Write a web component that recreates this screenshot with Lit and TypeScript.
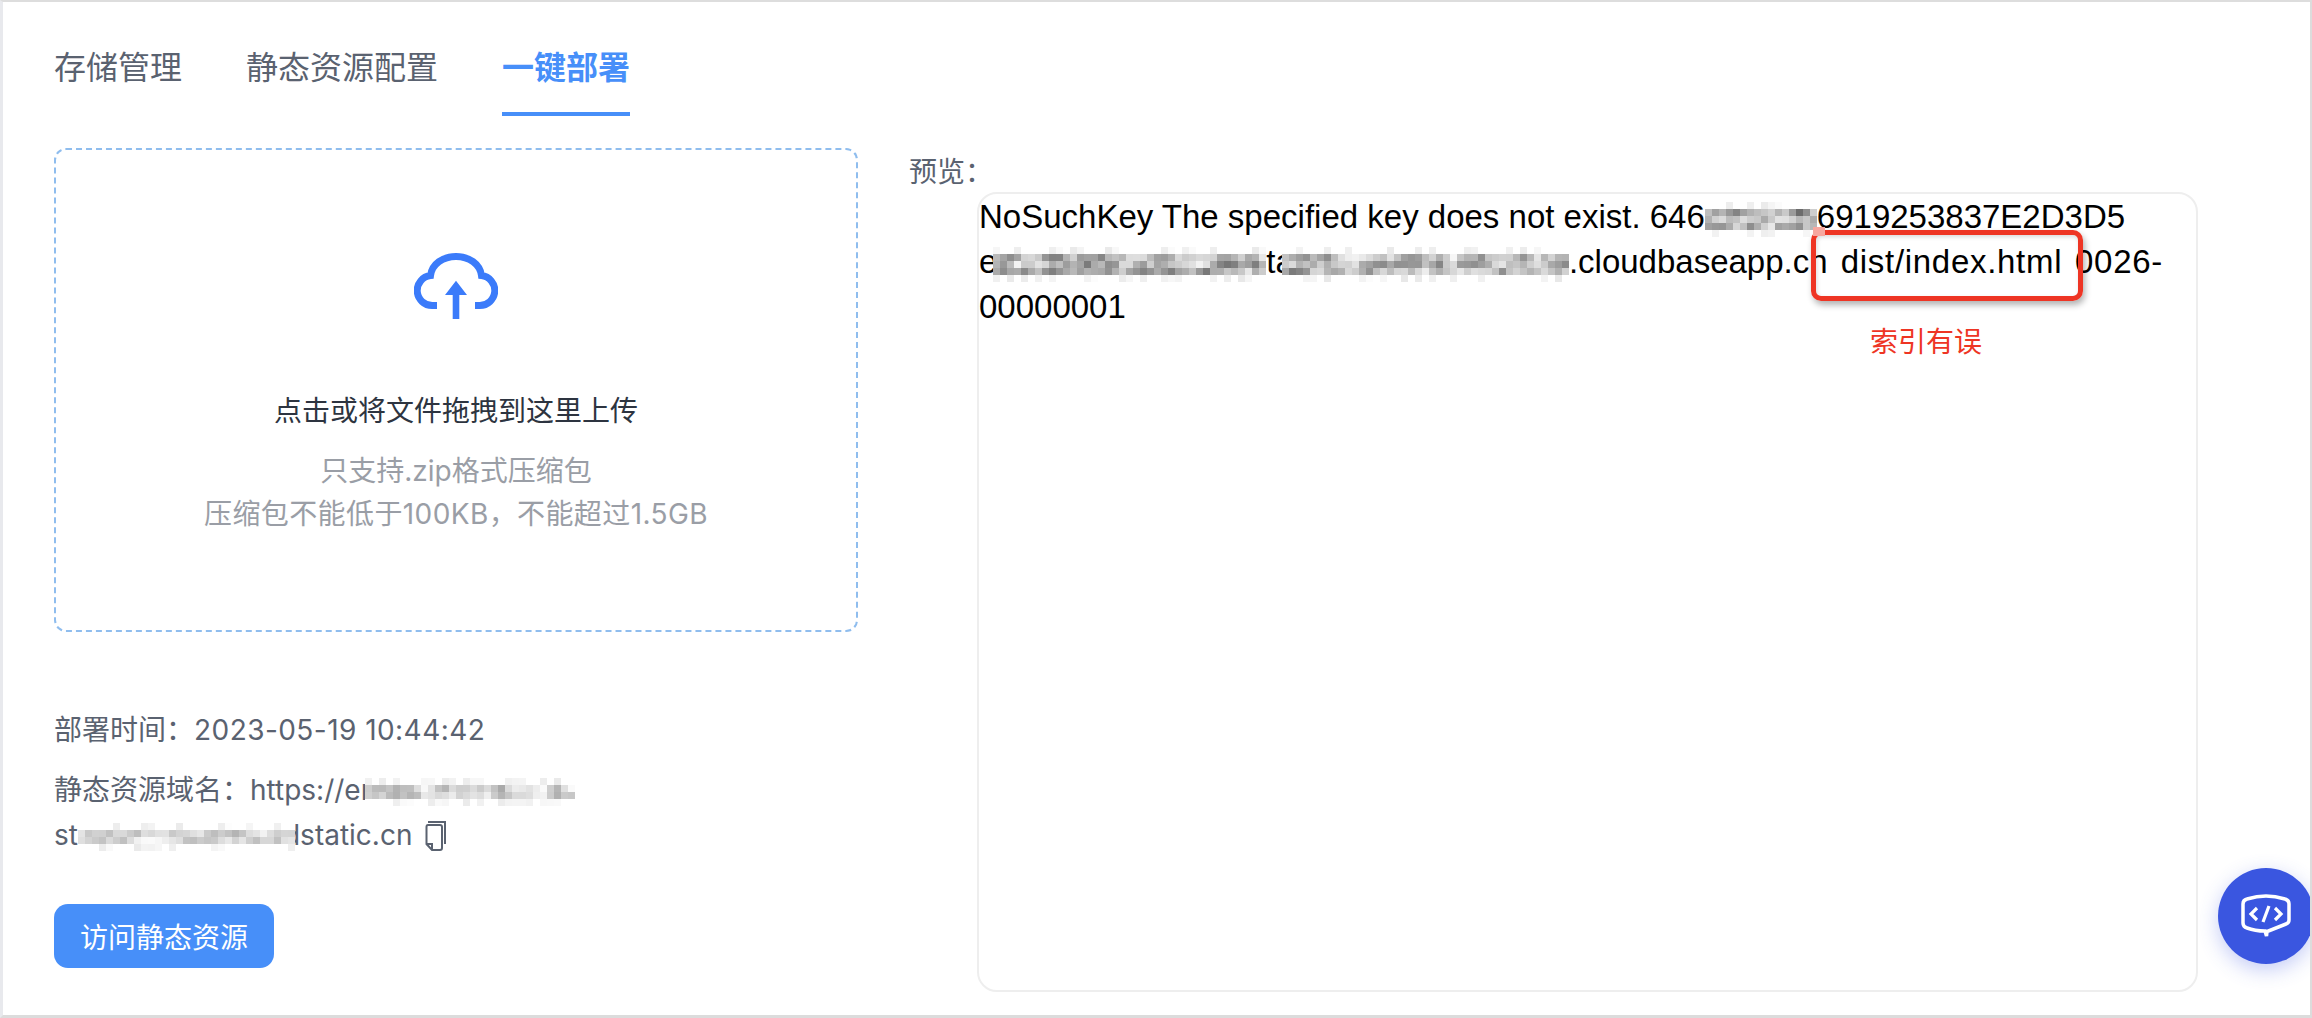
import { LitElement, html, css, svg } from "lit";
import { customElement, property } from "lit/decorators.js";

@customElement("pixel-block")
class PixelBlock extends LitElement {
  @property({ type: Number }) cols = 10;
  @property({ type: Number }) rows = 4;
  @property({ type: Number }) cell = 7;
  @property({ type: Number }) seed = 1;
  @property({ type: Number }) base = 170;
  static styles = css`
    :host { display: inline-block; vertical-align: middle; line-height: 0; position: relative; }
    svg { display: block; }
  `;
  render() {
    let s = this.seed * 9301 + 49297;
    const rnd = () => {
      s = (s * 9301 + 49297) % 233280;
      return s / 233280;
    };
    const cells = [];
    for (let y = 0; y < this.rows; y++) {
      const edge = y === 0 || y === this.rows - 1;
      let prev = rnd();
      for (let x = 0; x < this.cols; x++) {
        const r = rnd();
        const m = r * 0.6 + prev * 0.4;
        prev = r;
        let g = this.base + m * (255 - this.base);
        if (edge) g = r < 0.6 ? 255 : 215 + m * 40;
        const v = Math.round(g);
        cells.push(svg`<rect x=${x * this.cell} y=${y * this.cell} width=${this.cell} height=${this.cell} fill="rgb(${v},${v},${v})"></rect>`);
      }
    }
    const w = this.cols * this.cell;
    const h = this.rows * this.cell;
    return html`<svg width=${w} height=${h} viewBox="0 0 ${w} ${h}" shape-rendering="crispEdges">${cells}</svg>`;
  }
}

@customElement("app-root")
class AppRoot extends LitElement {
  static styles = css`
    :host { display: block; width: 2312px; height: 1018px; font-family: Inter, "Noto Sans CJK SC", sans-serif; }
    .card {
      position: relative; box-sizing: border-box; width: 2312px; height: 1018px; overflow: hidden;
      background: #fff; border-style: solid; border-color: #dddddd #dcdcdc #dcdcdc #e8e9ed;
      border-width: 2px 2px 3px 3px; padding: 0 0 0 51px;
    }
    .tabs { display: flex; gap: 64px; height: 114px; }
    .tab {
      box-sizing: border-box; height: 114px; padding-top: 43px; font-size: 32px; line-height: 40px;
      color: #5a6270; font-family: "Noto Sans CJK SC", sans-serif; border-bottom: 4px solid transparent;
    }
    .tab.active { color: #478ff9; font-weight: 600; border-bottom-color: #478ff9; }
    .body { display: flex; margin-top: 32px; }
    .left { width: 804px; flex: none; }
    .drop {
      box-sizing: border-box; height: 484px; border: 2px dashed #8fbdee; border-radius: 12px;
      display: flex; flex-direction: column; align-items: center; padding-top: 103px; font-size: 28px;
      font-family: "Noto Sans CJK SC", sans-serif;
    }
    .drop .cloud { display: block; width: 84px; height: 66px; }
    .main { margin-top: 68px; line-height: 44px; color: #2d3440; }
    .hint { margin-top: 19px; line-height: 43px; color: #9a9ea6; text-align: center; font-family: Inter, "Noto Sans CJK SC", sans-serif; }
    .wide { letter-spacing: .4px; }
    .time { letter-spacing: .45px; }
    .info { margin-top: 76px; font-size: 28px; line-height: 44px; color: #5a6270; }
    .info .row2 { margin-top: 16px; line-height: 45px; }
    .copy { display: inline-block; width: 21px; height: 30px; vertical-align: -6px; margin-left: 13px; }
    .over-before { margin-left: -6px; }
    .over-after { margin-right: -12px; }
    .over-e { margin-left: -4px; }
    .over-ta { margin-left: -12px; }
    .path { letter-spacing: .7px; word-spacing: 3px; margin-left: 4px; }
    .btn {
      display: flex; align-items: center; justify-content: center; width: 220px; height: 64px; margin-top: 46px;
      background: #478ff9; color: #fff; border-radius: 14px; font-size: 28px; font-family: "Noto Sans CJK SC", sans-serif;
    }
    .right { margin-left: 51px; flex: none; }
    .label { font-size: 28px; line-height: 44px; color: #5a6270; font-family: "Noto Sans CJK SC", sans-serif; }
    .preview {
      position: relative; box-sizing: border-box; width: 1221px; height: 800px; margin: 0 0 0 68px;
      border: 2px solid #eeeeee; border-radius: 20px;
      font-family: "Liberation Sans", sans-serif; font-size: 33px; line-height: 45px; color: #000; white-space: nowrap;
    }
    .mark {
      position: absolute; left: 832px; top: 36px; width: 272px; height: 71px; box-sizing: border-box;
      border: 5px solid #ee3524; border-radius: 10px; box-shadow: 2px 4px 6px rgba(0,0,0,.3), inset 1px 2px 4px rgba(0,0,0,.15);
    }
    .mark::before {
      content: ""; position: absolute; left: -3px; top: -8px; width: 12px; height: 9px; background: #f7a79f;
    }
    .note {
      position: absolute; left: 891px; top: 126px; font-size: 28px; line-height: 40px; color: #ee3524;
      font-family: "Noto Sans CJK SC", sans-serif;
    }
    .fab {
      position: absolute; left: 2215px; top: 866px; width: 96px; height: 96px; border-radius: 50%;
      background: #3a56e0; box-shadow: 0 6px 20px rgba(58,86,224,.3); display: flex; align-items: center; justify-content: center;
    }
    .fab svg { width: 50px; height: 44px; display: block; }
  `;
  render() {
    return html`<div class="card">
      <div class="tabs">
        <div class="tab">存储管理</div>
        <div class="tab">静态资源配置</div>
        <div class="tab active">一键部署</div>
      </div>
      <div class="body">
        <div class="left">
          <div class="drop">
            <svg class="cloud" viewBox="0 0 84 66" fill="none">
              <path d="M23 52.5H18.5A15 15 0 0 1 16.5 22.6C18 11 29 3.5 42 3.5C55 3.5 66 11 67.5 22.6A15 15 0 0 1 65.5 52.5H61" stroke="#3b7bfa" stroke-width="7"/>
              <path d="M42 27.7L53 42H45.3V66H38.7V42H31Z" fill="#3b7bfa"/>
            </svg>
            <div class="main">点击或将文件拖拽到这里上传</div>
            <div class="hint">只支持.zip格式压缩包<br/><span class="wide">压缩包不能低于100KB，不能超过1.5GB</span></div>
          </div>
          <div class="info">
            <div>部署时间：<span class="time">2023-05-19 10:44:42</span></div>
            <div class="row2">
              <div>静态资源域名：https://er<pixel-block class="over-before" cols="30" rows="4" seed="3" base="165"></pixel-block></div>
              <div>st<pixel-block class="over-after" cols="31" rows="4" seed="7" base="175"></pixel-block>dstatic.cn<svg class="copy" viewBox="0 0 21 30" fill="none" stroke="#5a6270" stroke-width="2"><path d="M3 1H20V23"/><path d="M3 4H15Q17 4 17 6V27Q17 29 15 29H7L1.5 23V6Q1.5 4 3 4Z"/><path d="M1.5 23H7V29"/></svg></div>
            </div>
          </div>
          <div class="btn">访问静态资源</div>
        </div>
        <div class="right">
          <div class="label">预览：</div>
          <div class="preview">
            <div>NoSuchKey The specified key does not exist. 646<pixel-block cols="16" rows="5" seed="11" base="100"></pixel-block>6919253837E2D3D5</div>
            <div>e<pixel-block class="over-e" cols="39" rows="5" seed="13" base="110"></pixel-block>ta<pixel-block class="over-ta" cols="41" rows="5" seed="17" base="120"></pixel-block>.cloudbaseapp.cn <span class="path">dist/index.html 0026-</span></div>
            <div>00000001</div>
            <div class="mark"></div>
            <div class="note">索引有误</div>
          </div>
        </div>
      </div>
      <div class="fab">
        <svg viewBox="0 0 50 44" fill="none" stroke="#fff">
          <path d="M25 2C33 2 39 3.5 44 5Q48 6 48 10V26Q48 29 45 30L26 37.5L25.5 42L24 37C16 37 10 35.5 6 34Q2 33 2 29V10Q2 6 6 5C11 3.5 17 2 25 2Z" stroke-width="3.5"/>
          <path d="M16 14L10 20L16 26M34 14L40 20L34 26M28 12L22 28" stroke-width="3.2"/>
        </svg>
      </div>
    </div>`;
  }
}
